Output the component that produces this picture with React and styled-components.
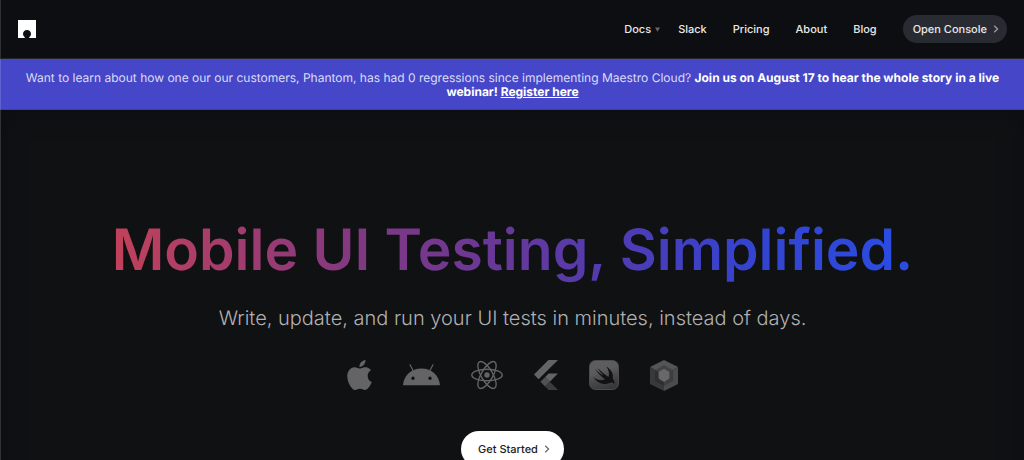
import styled, { createGlobalStyle, css } from "styled-components";
import { SiApple } from "react-icons/si";

const links = ["Slack", "Pricing", "About", "Blog"];

const Chevron = () => (
    <svg width="6" height="8" viewBox="0 0 6 8" fill="none" stroke="currentColor" strokeWidth="1.2" aria-hidden="true">
        <path d="M1.2 0.8 L4.6 4 L1.2 7.2" />
    </svg>
)

const Logo = () => (
    <svg width="18" height="18" viewBox="0 0 18 18" aria-hidden="true">
        <path fill="#fff" d="M0 0H18V18H11.2V17.3A4 4 0 1 0 6.8 17.3V18H0Z" />
    </svg>
)

const Android = () => (
    <svg width="37" height="30" viewBox="0 0 37 30" aria-hidden="true">
        <path fill="#646467" fillRule="evenodd" d="M0 25.2C.6 15.8 8.2 8.4 18.5 8.4S36.4 15.8 37 25.2ZM10 16.6a1.7 1.7 0 1 0 0 3.4a1.7 1.7 0 0 0 0-3.4ZM27 16.6a1.7 1.7 0 1 0 0 3.4a1.7 1.7 0 0 0 0-3.4Z" />
        <path stroke="#646467" strokeWidth="1.2" strokeLinecap="round" d="M10.2 10.8L7 4.8M26.8 10.8L30 4.8" />
    </svg>
)

const ReactLogo = () => (
    <svg width="32" height="30" viewBox="-16 -15 32 30" fill="none" stroke="#646467" strokeWidth="1.4" aria-hidden="true">
        <ellipse rx="15.2" ry="5.8" />
        <ellipse rx="15.2" ry="5.8" transform="rotate(60)" />
        <ellipse rx="15.2" ry="5.8" transform="rotate(120)" />
        <circle r="2.7" fill="#646467" stroke="none" />
    </svg>
)

const Flutter = () => (
    <svg width="24" height="30" viewBox="0 0 24 30" aria-hidden="true">
        <path fill="#646467" d="M14.4 0H24L4.6 19.2L0 14.6Z" />
        <path fill="#646467" d="M14.6 13.6H24L15.8 21.7L11.2 17Z" />
        <path fill="#525255" d="M6.4 21.7L11.1 17L15.8 21.7L11.1 26.4Z" />
        <path fill="#3c3c3f" d="M11.1 26.4L15.8 21.7L24 30H14.6Z" />
    </svg>
)

const Swift = () => (
    <svg width="30" height="30" viewBox="0 0 30 30" aria-hidden="true">
        <defs>
            <linearGradient id="swiftFill" x1="0.3" y1="0" x2="0.6" y2="1">
                <stop offset="0" stopColor="#5e5e61" />
                <stop offset="0.35" stopColor="#5c5c5f" />
                <stop offset="0.7" stopColor="#454548" />
                <stop offset="1" stopColor="#38383b" />
            </linearGradient>
        </defs>
        <rect x="0.5" y="0.5" width="29" height="29" rx="6" fill="url(#swiftFill)" stroke="#4c4c4f" />
        <path fill="#121215" d="M17.5 6.5C22 9.5 25 14 23.6 18.2C25.5 20.6 25.8 22.6 25.4 24.2C24.2 22.2 22.2 22.2 20.6 23C15.6 25.6 8.6 23.6 4.6 17.6C8 20 12.6 21.2 16 19.2C12 16.4 8.6 12.8 6 9C9 11.8 12.4 14.4 14.4 15.6C12.4 13.4 10 10.6 8.6 8C12 11.4 16 14.8 19.6 17C20.6 13.6 19.8 10 17.5 6.5Z" />
    </svg>
)

const Compose = () => (
    <svg width="28" height="31" viewBox="0 0 28 31" aria-hidden="true">
        <path fill="#555558" d="M14 0L28 7L14 15.5L0 7Z" />
        <path fill="#39393c" d="M0 7L14 15.5V31L0 24Z" />
        <path fill="#4c4c4f" d="M28 7V24L14 31V15.5Z" />
        <path fill="#434346" d="M5 10L14 5.2L23 10L14 15.5Z" />
        <path fill="#2f2f32" d="M5 10L14 15.5V26L5 21Z" />
        <path fill="#3d3d40" d="M23 10V21L14 26V15.5Z" />
        <path fill="#68686b" d="M14 8.8L19.4 12V18.6L14 22L8.6 18.6V12Z" />
    </svg>
)

const App = () => {
    return (
        <Page>
            <GlobalStyle />
            <Header>
                <LogoLink href="#" aria-label="Maestro"><Logo /></LogoLink>
                <Nav>
                    <DocsButton type="button">
                        Docs
                        <svg width="5" height="5" viewBox="0 0 5 5" aria-hidden="true">
                            <path fill="#66676b" d="M0 0.4H5L2.5 4.8Z" />
                        </svg>
                    </DocsButton>
                    <NavLinks>
                        {links.map((link) => (
                            <NavLink href="#" key={link}>{link}</NavLink>
                        ))}
                    </NavLinks>
                    <PillButton type="button">Open Console <Chevron /></PillButton>
                </Nav>
            </Header>
            <Banner>
                Want to learn about how one our our customers, Phantom, has had 0 regressions since implementing Maestro Cloud?{" "}
                <strong>
                    Join us on August 17 to hear the whole story in a live webinar! <a href="#">Register here</a>
                </strong>
            </Banner>
            <Hero>
                <Title>Mobile UI Testing, Simplified.</Title>
                <Subtitle>Write, update, and run your UI tests in minutes, instead of days.</Subtitle>
                <Platforms>
                    <AppleIcon viewBox="2 0 20 24" aria-hidden="true" />
                    <Android />
                    <ReactLogo />
                    <Flutter />
                    <Swift />
                    <Compose />
                </Platforms>
                <PillButton type="button" $primary>Get Started <Chevron /></PillButton>
            </Hero>
        </Page>
    )
}

export default App;

const GlobalStyle = createGlobalStyle`
    * {
        box-sizing: border-box;
    }
    body {
        margin: 0;
        background: #101113;
        font-family: Inter, "Liberation Sans", sans-serif;
        text-rendering: geometricPrecision;
    }
    button {
        font: inherit;
        text-rendering: inherit;
        cursor: pointer;
    }
    ::-webkit-scrollbar {
        display: none;
    }
`

const edge = css`
    border-left: 1px solid rgba(255, 255, 255, 0.14);
`

const Page = styled.div`
    min-height: 100vh;
    color: #fff;
`

const Header = styled.header`
    display: flex;
    align-items: center;
    justify-content: space-between;
    height: 59px;
    padding: 0 17px;
    background: #0d0e11;
    border-bottom: 1px solid #24252f;
    ${edge}
`

const LogoLink = styled.a`
    display: flex;
`

const Nav = styled.nav`
    display: flex;
    align-items: center;
    font-size: 11px;
    font-weight: 500;
    line-height: 14px;
`

const DocsButton = styled.button`
    display: flex;
    align-items: center;
    gap: 4px;
    padding: 0;
    margin-right: 18px;
    border: none;
    background: none;
    color: #e9e9ea;
`

const NavLinks = styled.div`
    display: flex;
    gap: 26px;
    margin-right: 26px;
`

const NavLink = styled.a`
    color: #e9e9ea;
    text-decoration: none;
`

const PillButton = styled.button((props) => css`
    display: flex;
    align-items: center;
    gap: 6px;
    height: ${props.$primary ? '36px' : '28px'};
    padding: ${props.$primary ? '0 14px 0 17px' : '0 8px 0 10px'};
    border: none;
    border-radius: 20px;
    background: ${props.$primary ? '#fff' : '#292b32'};
    color: ${props.$primary ? '#1b1c20' : '#e9e9ea'};
    font-size: 11px;
    font-weight: 500;
    white-space: nowrap;

    svg {
        color: ${props.$primary ? '#66676b' : '#a0a1a6'};
    }
`)

const Banner = styled.p`
    margin: 0;
    padding: 12px 24px 10px;
    border-bottom: 1px solid #3c3fae;
    background: #4547c8;
    color: #dcdcf6;
    font-size: 12px;
    line-height: 14px;
    text-align: center;
    ${edge}

    strong {
        color: #fff;
        font-weight: 700;
    }
    a {
        color: inherit;
    }
`

const Hero = styled.main`
    display: flex;
    flex-direction: column;
    align-items: center;
    padding: 104px 20px 40px;
    background: #101113;
    box-shadow: inset 0 0 24px #0c0d10;
    text-align: center;
    ${edge}
`

const Title = styled.h1`
    margin: 0;
    background: linear-gradient(90deg, #c2415a 0%, #833881 30%, #65389a 50%, #4a3db8 66%, #3443d0 80%, #2a4de4 100%);
    background-clip: text;
    -webkit-background-clip: text;
    color: transparent;
    font-size: 57px;
    font-weight: 600;
    line-height: 72px;
`

const Subtitle = styled.p`
    margin: 20px 0 30px;
    color: #b0b0b1;
    font-size: 20px;
    font-weight: 300;
    line-height: 24px;
`

const Platforms = styled.div`
    display: flex;
    gap: 31px;
    margin-bottom: 40px;
`

const AppleIcon = styled(SiApple)`
    width: 25px;
    height: 30px;
    color: #646467;
`
